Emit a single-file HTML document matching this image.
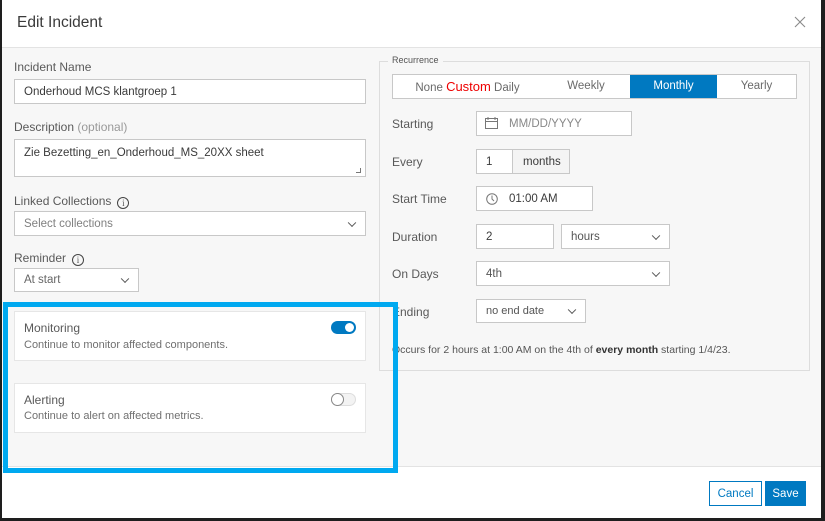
<!DOCTYPE html>
<html><head><meta charset="utf-8"><style>
*{box-sizing:border-box;margin:0;padding:0}
body{width:825px;height:521px;background:#1e1e1e;font-family:"Liberation Sans",sans-serif;position:relative;overflow:hidden;color:#4a4a4a}
.a{position:absolute}
.dlg{left:2px;top:0;width:819px;height:518px;background:#fff}
.body{left:2px;top:47px;width:819px;height:420px;background:#f7f7f7;border-top:1px solid #e3e3e3;border-bottom:1px solid #e3e3e3}
.lbl{font-size:12px;color:#595959;white-space:nowrap}
.inp{background:#fff;border:1px solid #c8c8c8;font-size:11.5px;color:#3a3a3a;display:flex;align-items:center;padding-left:9px;white-space:nowrap}
.chev{position:absolute;right:10px;top:50%;width:6px;height:6px;border-right:1.2px solid #555;border-bottom:1.2px solid #555;transform:translateY(-70%) rotate(45deg)}
.card{background:#fff;border:1px solid #e6e6e6}
.info{display:inline-block;width:12px;height:12px;border:1px solid #444;border-radius:50%;font-size:9px;text-align:center;line-height:10px;vertical-align:-1px;margin-left:6px;font-family:"Liberation Serif",serif}
.tab{position:absolute;top:75px;height:23px;line-height:23px;font-size:11.5px;color:#6a6a6a;text-align:center}
</style></head><body>
<div class="a dlg"></div>
<div class="a" style="left:17px;top:14px;font-size:15.5px;color:#3a3a3a">Edit Incident</div>
<div class="a" style="left:793px;top:15px;width:14px;height:14px">
<svg width="14" height="14"><path d="M2 2L12 12M12 2L2 12" stroke="#8a8a8a" stroke-width="1.1"/></svg></div>
<div class="a body"></div>

<div class="a lbl" style="left:14px;top:60px">Incident Name</div>
<div class="a inp" style="left:14px;top:79px;width:352px;height:25px">Onderhoud MCS klantgroep 1</div>
<div class="a lbl" style="left:14px;top:120px">Description <span style="color:#999">(optional)</span></div>
<div class="a inp" style="left:14px;top:139px;width:352px;height:38px;align-items:flex-start;padding-top:7px">Zie Bezetting_en_Onderhoud_MS_20XX sheet</div>
<div class="a" style="left:356px;top:168px;width:5px;height:5px;border-right:1px solid #777;border-bottom:1px solid #777"></div>
<div class="a lbl" style="left:14px;top:194px">Linked Collections<span class="info">i</span></div>
<div class="a inp" style="left:14px;top:211px;width:352px;height:25px;color:#808080">Select collections<span class="chev"></span></div>
<div class="a lbl" style="left:14px;top:251px">Reminder<span class="info">i</span></div>
<div class="a inp" style="left:14px;top:268px;width:125px;height:24px;color:#666">At start<span class="chev"></span></div>

<div class="a card" style="left:14px;top:311px;width:352px;height:50px"></div>
<div class="a lbl" style="left:24px;top:321px">Monitoring</div>
<div class="a" style="left:24px;top:339px;font-size:11px;color:#707070">Continue to monitor affected components.</div>
<div class="a" style="left:331px;top:321px;width:25px;height:13px;border-radius:7px;background:#0079c1"></div>
<div class="a" style="left:345px;top:323px;width:9px;height:9px;border-radius:50%;background:#fff"></div>
<div class="a card" style="left:14px;top:383px;width:352px;height:50px"></div>
<div class="a lbl" style="left:24px;top:393px">Alerting</div>
<div class="a" style="left:24px;top:410px;font-size:11px;color:#707070">Continue to alert on affected metrics.</div>
<div class="a" style="left:331px;top:393px;width:25px;height:13px;border-radius:7px;background:#f3f3f3;border:1px solid #ddd"></div>
<div class="a" style="left:331px;top:393px;width:13px;height:13px;border-radius:50%;background:#fff;border:1.2px solid #888"></div>

<div class="a" style="left:379px;top:61px;width:431px;height:310px;border:1px solid #ddd"></div>
<div class="a" style="left:388px;top:55px;padding:0 4px;background:#f7f7f7;font-size:9px;color:#555">Recurrence</div>
<div class="a" style="left:392px;top:74px;width:405px;height:25px;background:#fff;border:1px solid #c8c8c8"></div>
<div class="tab" style="left:400px;width:135px;white-space:nowrap">None <span style="color:#e00;font-size:13px">Custom</span> Daily</div>
<div class="tab" style="left:543px;width:86px">Weekly</div>
<div class="a" style="left:630px;top:75px;width:87px;height:23px;background:#0079c1;color:#fff;font-size:11.5px;text-align:center;line-height:23px">Monthly</div>
<div class="tab" style="left:717px;width:79px">Yearly</div>

<div class="a lbl" style="left:392px;top:117px">Starting</div>
<div class="a inp" style="left:476px;top:111px;width:156px;height:25px;color:#888;padding-left:32px">MM/DD/YYYY</div>
<svg class="a" style="left:485px;top:117px" width="13" height="12"><rect x="0.5" y="1.5" width="12" height="10" fill="none" stroke="#777"/><path d="M0.5 4.5H12.5M3 0V3M10 0V3" stroke="#777"/></svg>
<div class="a lbl" style="left:392px;top:155px">Every</div>
<div class="a inp" style="left:476px;top:149px;width:37px;height:25px">1</div>
<div class="a inp" style="left:512px;top:149px;width:58px;height:25px;background:#f4f4f4;padding-left:10px">months</div>
<div class="a lbl" style="left:392px;top:192px">Start Time</div>
<div class="a inp" style="left:476px;top:186px;width:117px;height:25px;padding-left:32px">01:00 AM</div>
<svg class="a" style="left:486px;top:193px" width="12" height="12"><circle cx="6" cy="6" r="5.3" fill="none" stroke="#777"/><path d="M6 2.5V6L8 8" fill="none" stroke="#777"/></svg>
<div class="a lbl" style="left:392px;top:230px">Duration</div>
<div class="a inp" style="left:476px;top:224px;width:78px;height:25px">2</div>
<div class="a inp" style="left:561px;top:224px;width:109px;height:25px;color:#555">hours<span class="chev"></span></div>
<div class="a lbl" style="left:392px;top:267px">On Days</div>
<div class="a inp" style="left:476px;top:261px;width:194px;height:25px;color:#555">4th<span class="chev"></span></div>
<div class="a lbl" style="left:392px;top:305px">Ending</div>
<div class="a inp" style="left:476px;top:299px;width:110px;height:24px;color:#555;font-size:11px">no end date<span class="chev"></span></div>
<div class="a" style="left:392px;top:344px;font-size:10.5px;color:#555;white-space:nowrap">Occurs for 2 hours at 1:00 AM on the 4th of <b style="color:#333">every month</b> starting 1/4/23.</div>

<div class="a" style="left:3px;top:302px;width:395px;height:171px;border:5px solid #00a9f0"></div>

<div class="a" style="left:709px;top:481px;width:53px;height:25px;border:1px solid #0079c1;background:#fff;color:#0079c1;font-size:11.5px;display:flex;align-items:center;justify-content:center">Cancel</div>
<div class="a" style="left:765px;top:481px;width:41px;height:25px;background:#0079c1;color:#fff;font-size:11.5px;display:flex;align-items:center;justify-content:center">Save</div>
</body></html>
